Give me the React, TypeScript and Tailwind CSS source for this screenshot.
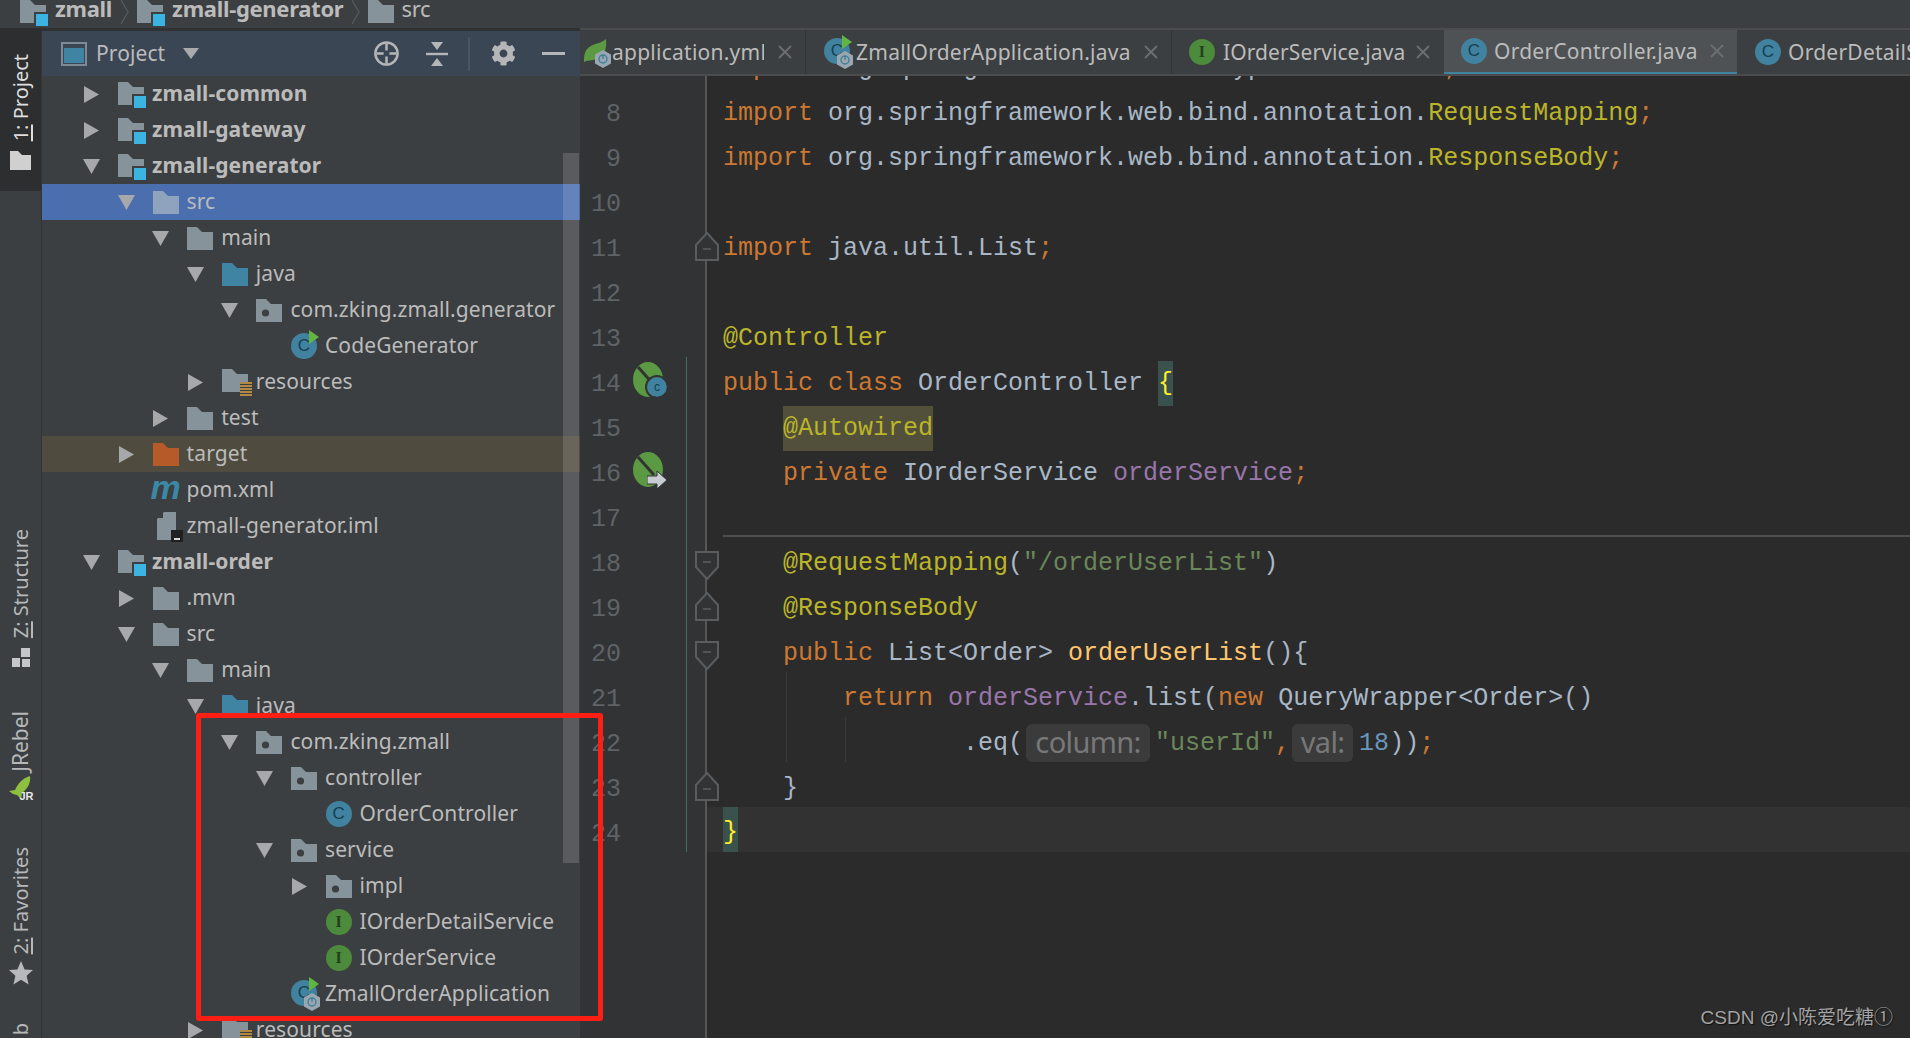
import React from 'react';
import { FaCog } from 'react-icons/fa';

const kw = 'text-[#cc7832]';
const ann = 'text-[#bbb529]';
const str = 'text-[#6a8759]';
const fld = 'text-[#9876aa]';
const mth = 'text-[#ffc66d]';
const num = 'text-[#6897bb]';

const Folder = ({ color = 'fill-[#87939a]', dot = false }: { color?: string; dot?: boolean }) => (
  <svg viewBox="0 0 26 23" className="w-[26px] h-[23px] shrink-0">
    <path className={color} d="M0 0h10l5 5h11v18H0z" />
    {dot && <circle cx="9.5" cy="14" r="3.6" fill="#3c3f41" />}
  </svg>
);

const ModuleFolder = () => (
  <span className="relative w-[28px] h-[24px] shrink-0 block">
    <svg viewBox="0 0 26 23" className="w-[26px] h-[23px] absolute left-0 top-0">
      <path className="fill-[#87939a]" d="M0 0h10l5 5h11v18H0z" />
    </svg>
    <span className="absolute right-0 bottom-[-2px] w-[12px] h-[12px] bg-[#3cb4e2] outline-2 outline-[#3c3f41]" />
  </span>
);

const ResFolder = () => (
  <span className="relative w-[28px] h-[26px] shrink-0 block">
    <svg viewBox="0 0 26 23" className="w-[26px] h-[23px] absolute left-0 top-0">
      <path className="fill-[#87939a]" d="M0 0h10l5 5h11v18H0z" />
    </svg>
    <svg viewBox="0 0 12 14" className="absolute right-[-2px] bottom-[-1px] w-[12px] h-[14px]">
      <rect width="12" height="14" fill="#3c3f41" />
      <path d="M0 1h12M0 4h12M0 7h12M0 10h12M0 13h12" stroke="#d9a343" strokeWidth="1.6" />
    </svg>
  </span>
);

const ClassIcon = () => (
  <span className="flex items-center justify-center rounded-full bg-[#40829f] text-[#173f50] shrink-0 font-['Liberation_Sans'] w-[26px] h-[26px] text-[17px]">
    C
  </span>
);

const InterfaceIcon = () => (
  <span className="flex items-center justify-center rounded-full bg-[#4c8a3c] text-[#243f1c] shrink-0 w-[26px] h-[26px] text-[16px] font-bold font-['Liberation_Serif']">
    I
  </span>
);

const GearBadge = () => (
  <svg viewBox="0 0 16 18" className="absolute right-[-2px] bottom-[-3px] w-[16px] h-[18px]">
    <path d="M8 0l8 4.500v9l-8 4.500-8-4.500v-9z" fill="#9aa7b0" />
    <circle cx="8" cy="9" r="4" fill="none" stroke="#3f7f99" strokeWidth="1.4" />
    <path d="M8 5v4" stroke="#3f7f99" strokeWidth="1.4" />
  </svg>
);

const AppIcon = () => (
  <span className="relative w-[27px] h-[28px] shrink-0 block">
    <span className="absolute left-0 top-0 w-[26px] h-[26px] rounded-full bg-[#40829f] flex items-center justify-center text-[#173f50] text-[17px] font-['Liberation_Sans']">C</span>
    <svg viewBox="0 0 10 14" className="absolute right-[-1px] top-[-3px] w-[10px] h-[14px]">
      <path d="M0 0l10 7-10 7z" fill="#62b543" />
    </svg>
    <GearBadge />
  </span>
);

const LeafIcon = () => (
  <span className="relative w-[26px] h-[26px] shrink-0 block">
    <svg viewBox="0 0 24 24" className="absolute left-0 top-0 w-[24px] h-[24px]">
      <path d="M23 0c1 9-1 17-9 20-5 2-10 1-13 3 0-8 1-13 7-16 5-3 11-3 15-7z" fill="#5b9a43" />
    </svg>
    <GearBadge />
  </span>
);

const PomIcon = () => (
  <span className="w-[28px] shrink-0 text-[#3b87a6] text-[34px] leading-[24px] font-bold italic font-['Liberation_Sans'] -mt-[6px] -ml-[2px]">m</span>
);

const ImlIcon = () => (
  <span className="relative w-[26px] h-[28px] shrink-0 block ml-[4px]">
    <svg viewBox="0 0 20 28" className="absolute left-0 top-0 w-[20px] h-[28px]">
      <path d="M7 0h12v28H0V7z" fill="#87939a" />
      <path d="M0 6l6-6v6z" fill="#3c3f41" />
    </svg>
    <span className="absolute right-[0px] bottom-[-2px] w-[12px] h-[12px] bg-[#1f2021] flex items-end justify-center pb-[2px]">
      <span className="w-[6px] h-[2px] bg-[#d8d8d8]" />
    </span>
  </span>
);

const Arrow = ({ open }: { open?: boolean }) => (
  <svg viewBox="0 0 17 17" className="w-[17px] h-[17px]">
    {open ? <path d="M0 1h17l-8.500 15z" fill="#a6a8aa" /> : <path d="M1 0l15 8.500-15 8.500z" fill="#a6a8aa" />}
  </svg>
);

type TreeItem = {
  d: number;
  t: string;
  i: React.ReactNode;
  open?: boolean;
  bold?: boolean;
  bg?: string;
};

const src = <Folder color="fill-[#87939a]" />;
const pkg = <Folder dot />;
const java = <Folder color="fill-[#3f84a2]" />;

const tree: TreeItem[] = [
  { d: 0, t: 'zmall-common', i: <ModuleFolder />, open: false, bold: true },
  { d: 0, t: 'zmall-gateway', i: <ModuleFolder />, open: false, bold: true },
  { d: 0, t: 'zmall-generator', i: <ModuleFolder />, open: true, bold: true },
  { d: 1, t: 'src', i: <Folder color="fill-[#8fa3bf]" />, open: true, bg: 'bg-[#4b6eaf]' },
  { d: 2, t: 'main', i: src, open: true },
  { d: 3, t: 'java', i: java, open: true },
  { d: 4, t: 'com.zking.zmall.generator', i: pkg, open: true },
  { d: 5, t: 'CodeGenerator', i: <AppPlain /> },
  { d: 3, t: 'resources', i: <ResFolder />, open: false },
  { d: 2, t: 'test', i: src, open: false },
  { d: 1, t: 'target', i: <Folder color="fill-[#b65a2a]" />, open: false, bg: 'bg-[#4f4b3f]' },
  { d: 1, t: 'pom.xml', i: <PomIcon /> },
  { d: 1, t: 'zmall-generator.iml', i: <ImlIcon /> },
  { d: 0, t: 'zmall-order', i: <ModuleFolder />, open: true, bold: true },
  { d: 1, t: '.mvn', i: src, open: false },
  { d: 1, t: 'src', i: src, open: true },
  { d: 2, t: 'main', i: src, open: true },
  { d: 3, t: 'java', i: java, open: true },
  { d: 4, t: 'com.zking.zmall', i: pkg, open: true },
  { d: 5, t: 'controller', i: pkg, open: true },
  { d: 6, t: 'OrderController', i: <ClassIcon /> },
  { d: 5, t: 'service', i: pkg, open: true },
  { d: 6, t: 'impl', i: pkg, open: false },
  { d: 6, t: 'IOrderDetailService', i: <InterfaceIcon /> },
  { d: 6, t: 'IOrderService', i: <InterfaceIcon /> },
  { d: 5, t: 'ZmallOrderApplication', i: <AppIcon /> },
  { d: 3, t: 'resources', i: <ResFolder />, open: false },
];

function AppPlain() {
  return (
    <span className="relative w-[27px] h-[26px] shrink-0 block">
      <span className="absolute left-0 top-0 w-[26px] h-[26px] rounded-full bg-[#40829f] flex items-center justify-center text-[#173f50] text-[17px] font-['Liberation_Sans']">C</span>
      <svg viewBox="0 0 10 14" className="absolute right-[-1px] top-[-3px] w-[10px] h-[14px]">
        <path d="M0 0l10 7-10 7z" fill="#62b543" />
      </svg>
    </span>
  );
}

const Tree = () => (
  <div className="flex flex-col">
    {tree.map((r, idx) => (
      <div
        key={idx}
        className={`flex items-center h-9 shrink-0 ${r.bg ?? ''} ${r.bold ? 'font-bold' : ''}`}
        style={{ paddingLeft: 41 + r.d * 34.6 }}
      >
        <span className="w-[35px] shrink-0 flex">{r.open !== undefined && <Arrow open={r.open} />}</span>
        <span className="w-[34px] shrink-0 flex items-center">{r.i}</span>
        <span className="whitespace-nowrap">{r.t}</span>
      </div>
    ))}
  </div>
);

const Vert = ({ u, t }: { u: string; t: string }) => (
  <span className="[writing-mode:vertical-rl] rotate-180 whitespace-nowrap text-[20px] leading-none">
    <span className="underline">{u}</span> {t}
  </span>
);

const Strip = () => (
  <div className="w-[42px] shrink-0 border-r border-[#323436] flex flex-col items-center text-[#b6b8ba] font-['Noto_Sans'] overflow-hidden">
    <div className="w-full h-[163px] shrink-0 bg-[#2d2e30] flex flex-col items-center pt-[26px] text-[#dedede]">
      <Vert u="1:" t="Project" />
      <svg viewBox="0 0 21 19" className="w-[21px] h-[19px] mt-[10px]">
        <path d="M0 0h8l4 4h9v15H0z" fill="#d0d0d0" />
      </svg>
    </div>
    <div className="mt-[338px] flex flex-col items-center">
      <Vert u="Z:" t="Structure" />
      <svg viewBox="0 0 18 19" className="w-[18px] h-[19px] mt-[10px]">
        <path d="M9 0h9v9H9zM0 10h8v9H0zM10 11h8v8h-8z" fill="#c4c6c8" />
      </svg>
    </div>
    <div className="mt-[44px] flex flex-col items-center">
      <span className="[writing-mode:vertical-rl] rotate-180 whitespace-nowrap text-[21px] leading-none">JRebel</span>
      <span className="relative block w-[26px] h-[26px] mt-[4px]">
        <svg viewBox="0 0 24 24" className="absolute left-0 top-0 w-[24px] h-[24px]">
          <path d="M22 0c1 8-3 13-8 17l-1 6-4-4-4-1-4-3 6-1C10 7 15 2 22 0z" fill="#8fbf3f" />
        </svg>
        <span className="absolute right-0 bottom-0 text-[11px] leading-none font-bold text-[#e8e8e8] font-['Liberation_Sans']">JR</span>
      </span>
    </div>
    <div className="mt-[45px] flex flex-col items-center">
      <Vert u="2:" t="Favorites" />
      <svg viewBox="0 0 24 24" className="w-[24px] h-[24px] mt-[7px]">
        <path d="M12 0l3.600 8.400 8.400.7-6.400 5.600 2 8.800L12 18.800 4.400 23.500l2-8.800L0 9.100l8.400-.7z" fill="#b6b8ba" />
      </svg>
    </div>
    <span className="mt-[38px] [writing-mode:vertical-rl] rotate-180 text-[20px] leading-none">b</span>
  </div>
);

const ProjectPanel = () => (
  <div className="relative w-[538px] shrink-0 text-[21px] text-[#bbbbbb] font-['Noto_Sans'] tracking-[0.1px] overflow-hidden">
    <div className="h-[45px] bg-[#3b4655] flex items-center">
      <span className="ml-[19px] w-[26px] h-[24px] border-2 border-[#808a94] p-[1px] block shrink-0">
        <span className="block w-full h-full bg-[#3f84a2] border-t-[3px] border-[#3b4655]" />
      </span>
      <span className="ml-[9px] w-[78px] shrink-0">Project</span>
      <svg viewBox="0 0 16 11" className="w-[16px] h-[11px] ml-[9px] shrink-0">
        <path d="M0 0h16L8 11z" fill="#a8aaac" />
      </svg>
      <svg viewBox="0 0 28 28" className="w-[27px] h-[27px] ml-[174px] shrink-0" fill="none" stroke="#b4b6b8" strokeWidth="2.600">
        <circle cx="14" cy="14" r="11.500" />
        <path d="M14 4v7M14 17v7M4 14h7M17 14h7" />
      </svg>
      <svg viewBox="0 0 24 24" className="w-[24px] h-[24px] ml-[25px] shrink-0">
        <path d="M6 0h12l-6 8zM6 24h12l-6-8z" fill="#b4b6b8" />
        <path d="M1 12h22" stroke="#b4b6b8" strokeWidth="2.400" />
      </svg>
      <span className="w-[2px] h-[34px] bg-[#4a5563] ml-[19px] shrink-0" />
      <FaCog className="w-[25px] h-[25px] ml-[21px] shrink-0 text-[#b4b6b8]" />
      <span className="w-[23px] h-[3px] bg-[#b4b6b8] ml-[26px] shrink-0" />
    </div>
    <Tree />
    <div className="absolute left-[521px] top-[122px] w-[16px] h-[710px] bg-white/15" />
  </div>
);

const Close = () => (
  <svg viewBox="0 0 14 14" className="w-[14px] h-[14px] shrink-0" stroke="#6c6f71" strokeWidth="1.800">
    <path d="M1 1l12 12M13 1L1 13" />
  </svg>
);

const TabBar = () => (
  <div className="h-[48px] shrink-0 flex border-t-2 border-b-2 border-[#4a4c4e] text-[21px] text-[#bbbbbb] font-['Noto_Sans'] tracking-[0.25px] relative z-10 bg-[#3c3f41] overflow-hidden">
    <div className="w-[226px] shrink-0 flex items-center pl-[3px] pr-[13px] border-r border-[#323436]">
      <LeafIcon />
      <span className="ml-[3px] w-[152px] overflow-hidden whitespace-nowrap pt-[2px]">application.yml</span>
      <span className="ml-auto"><Close /></span>
    </div>
    <div className="w-[366px] shrink-0 flex items-center pl-[18px] pr-[13px] border-r border-[#323436]">
      <AppIcon />
      <span className="ml-[5px] whitespace-nowrap pt-[2px]">ZmallOrderApplication.java</span>
      <span className="ml-auto"><Close /></span>
    </div>
    <div className="w-[272px] shrink-0 flex items-center pl-[17px] pr-[14px]">
      <InterfaceIcon />
      <span className="ml-[8px] whitespace-nowrap pt-[2px] tracking-[0.1px]">IOrderService.java</span>
      <span className="ml-auto"><Close /></span>
    </div>
    <div className="w-[293px] shrink-0 flex items-center pl-[17px] pr-[13px] bg-[#4e5254] border-b-4 border-[#4083a0] -mb-[2px]">
      <ClassIcon />
      <span className="ml-[7px] whitespace-nowrap pt-[2px]">OrderController.java</span>
      <span className="ml-auto"><Close /></span>
    </div>
    <div className="flex items-center pl-[18px] whitespace-nowrap">
      <ClassIcon />
      <span className="ml-[7px] pt-[2px]">OrderDetailServiceImpl.java</span>
    </div>
  </div>
);

const FoldUp = () => (
  <svg viewBox="0 0 24 29" className="absolute left-[115px] top-[10px] w-[24px] h-[29px]" fill="#313335" stroke="#5a5c5e" strokeWidth="2">
    <path d="M12 1l11 12v15H1V13z" />
    <path d="M8 17h8" strokeWidth="1.600" />
  </svg>
);

const FoldDown = () => (
  <svg viewBox="0 0 24 29" className="absolute left-[115px] top-[14px] w-[24px] h-[29px]" fill="#313335" stroke="#5a5c5e" strokeWidth="2">
    <path d="M1 1h22v15L12 28 1 16z" />
    <path d="M8 11h8" strokeWidth="1.600" />
  </svg>
);

const Bean = ({ arrow }: { arrow?: boolean }) => (
  <span className="relative block w-[34px] h-[35px] shrink-0 ml-[12px]">
    <svg viewBox="0 0 30 35" className="absolute left-0 top-0 w-[30px] h-[35px]">
      <ellipse cx="15" cy="17.500" rx="15" ry="17.500" fill="#5b9a43" />
      <path d="M5 5l16 18" stroke="#313335" strokeWidth="3" />
    </svg>
    {arrow ? (
      <svg viewBox="0 0 20 18" className="absolute right-0 bottom-[-2px] w-[20px] h-[18px]">
        <path d="M0 5h10V0l10 9-10 9v-5H0z" fill="#c6ccd2" stroke="#313335" strokeWidth="1" />
      </svg>
    ) : (
      <span className="absolute right-0 bottom-0 w-[20px] h-[20px] rounded-full bg-[#40829f] outline-2 outline-[#313335] flex items-center justify-center text-[12px] text-[#173f50] font-['Liberation_Sans']">c</span>
    )}
  </span>
);

const Gutter = () => {
  const nums = Array.from({ length: 18 }, (_, i) => i + 7);
  return (
    <div className="relative z-10 w-[127px] shrink-0 bg-[#313335] border-r-2 border-[#555759] text-[#606366] font-['Liberation_Mono'] text-[25px]">
      <div className="absolute left-[106px] top-[281px] w-[1px] h-[495px] bg-[#47695f]" />
      <div className="-mt-[34px]">
        {nums.map((n) => (
          <div key={n} className="relative h-[45px] flex items-center">
            <span className="w-[41px] shrink-0 text-right leading-[45px] pt-[9px]">{n}</span>
            {n === 14 && <Bean />}
            {n === 16 && <Bean arrow />}
            {(n === 11 || n === 19 || n === 23) && <FoldUp />}
            {(n === 18 || n === 20) && <FoldDown />}
          </div>
        ))}
      </div>
    </div>
  );
};

const L = ({ children, className = '' }: { children?: React.ReactNode; className?: string }) => (
  <div className={`h-[45px] pl-[16px] whitespace-pre leading-[45px] ${className}`}>
    <span className="relative top-[4px]">{children}</span>
  </div>
);

const Hint = ({ t, w }: { t: string; w: string }) => (
  <span className={`inline-block h-[38px] leading-[36px] rounded-[6px] bg-[#3b3b3b] text-[#787878] text-[29px] text-center font-['Noto_Sans'] tracking-[-0.6px] align-middle ${w}`}>
    {t}
  </span>
);

const Code = () => (
  <div className="relative flex-1 min-w-0 bg-[#2b2b2b] text-[#a9b7c6] font-['Liberation_Mono'] text-[25px] overflow-hidden">
    <div className="absolute left-[79px] top-[596px] w-[1px] h-[90px] bg-[#3a3a3a]" />
    <div className="absolute left-[138px] top-[641px] w-[1px] h-[45px] bg-[#3a3a3a]" />
    <div className="-mt-[34px]">
      <L><span className={kw}>import</span> org.springframework.stereotype.<span className={ann}>Controller</span><span className={kw}>;</span></L>
      <L><span className={kw}>import</span> org.springframework.web.bind.annotation.<span className={ann}>RequestMapping</span><span className={kw}>;</span></L>
      <L><span className={kw}>import</span> org.springframework.web.bind.annotation.<span className={ann}>ResponseBody</span><span className={kw}>;</span></L>
      <L />
      <L><span className={kw}>import</span> java.util.List<span className={kw}>;</span></L>
      <L />
      <L><span className={ann}>@Controller</span></L>
      <L><span className={kw}>public class</span> OrderController <span className="inline-block h-[45px] -my-[4px] bg-[#3b514d] text-[#ffef28]">{'{'}</span></L>
      <L>{'    '}<span className={`inline-block h-[45px] bg-[#52503a] ${ann}`}>@Autowired</span></L>
      <L>{'    '}<span className={kw}>private</span> IOrderService <span className={fld}>orderService</span><span className={kw}>;</span></L>
      <L className="border-b-2 border-[#4d4d4d] ml-[16px] !pl-0" />
      <L>{'    '}<span className={ann}>@RequestMapping</span>(<span className={str}>"/orderUserList"</span>)</L>
      <L>{'    '}<span className={ann}>@ResponseBody</span></L>
      <L>{'    '}<span className={kw}>public</span> List&lt;Order&gt; <span className={mth}>orderUserList</span>(){'{'}</L>
      <L>{'        '}<span className={kw}>return</span> <span className={fld}>orderService</span>.list(<span className={kw}>new</span> QueryWrapper&lt;Order&gt;()</L>
      <L>
        {'                '}.eq(<span className="ml-[3px]"><Hint t="column:" w="w-[124px]" /></span>
        <span className={`ml-[5px] ${str}`}>"userId"</span><span className={kw}>,</span>
        <span className="ml-[2px]"><Hint t="val:" w="w-[61px]" /></span>
        <span className={`ml-[6px] ${num}`}>18</span>))<span className={kw}>;</span>
      </L>
      <L>{'    '}{'}'}</L>
      <div className="h-[45px] bg-[#323232] pl-[16px] leading-[45px]">
        <span className="inline-block h-[45px] w-[15px] bg-[#3b514d] text-[#ffef28]"><span className="relative top-[3px]">{'}'}</span></span>
      </div>
    </div>
  </div>
);

const Crumb = ({ icon, text, bold }: { icon: React.ReactNode; text: string; bold?: boolean }) => (
  <span className={`flex items-start ${bold ? 'font-bold' : ''}`}>
    {icon}
    <span className="ml-[7px] whitespace-nowrap leading-[16px]">{text}</span>
  </span>
);

const Chevron = () => (
  <svg viewBox="0 0 9 24" className="w-[9px] h-[24px] mx-[8px] shrink-0" fill="none" stroke="#57595b" strokeWidth="1.300">
    <path d="M1 0l7 12-7 12" />
  </svg>
);

export default function App() {
  return (
    <div className="relative w-[1910px] h-[1038px] overflow-hidden bg-[#3c3f41] flex flex-col">
      <div className="h-[28px] shrink-0 flex items-start pl-[20px] text-[22px] text-[#bbbbbb] font-['Noto_Sans'] tracking-[-0.3px] overflow-hidden">
        <Crumb icon={<ModuleFolder />} text="zmall" bold />
        <Chevron />
        <Crumb icon={<ModuleFolder />} text="zmall-generator" bold />
        <Chevron />
        <Crumb icon={<Folder />} text="src" />
      </div>
      <div className="flex-1 min-h-0 flex">
        <Strip />
        <div className="flex flex-col w-[538px] shrink-0">
          <div className="h-[3px] bg-[#2f3133] shrink-0" />
          <ProjectPanel />
        </div>
        <div className="flex-1 min-w-0 flex flex-col">
          <TabBar />
          <div className="flex-1 min-h-0 flex overflow-hidden">
            <Gutter />
            <Code />
          </div>
        </div>
      </div>
      <div className="absolute z-20 left-[196px] top-[713px] w-[407px] h-[308px] border-[5px] border-[#fe1f14] rounded-[3px]" />
      <div className="absolute right-[17px] top-[1005px] text-[19px] leading-[26px] text-[#a3a3a3] font-['Liberation_Sans','Noto_Sans_CJK_SC',sans-serif] [text-shadow:1px_1px_1px_#111]">
        CSDN @小陈爱吃糖①
      </div>
    </div>
  );
}
